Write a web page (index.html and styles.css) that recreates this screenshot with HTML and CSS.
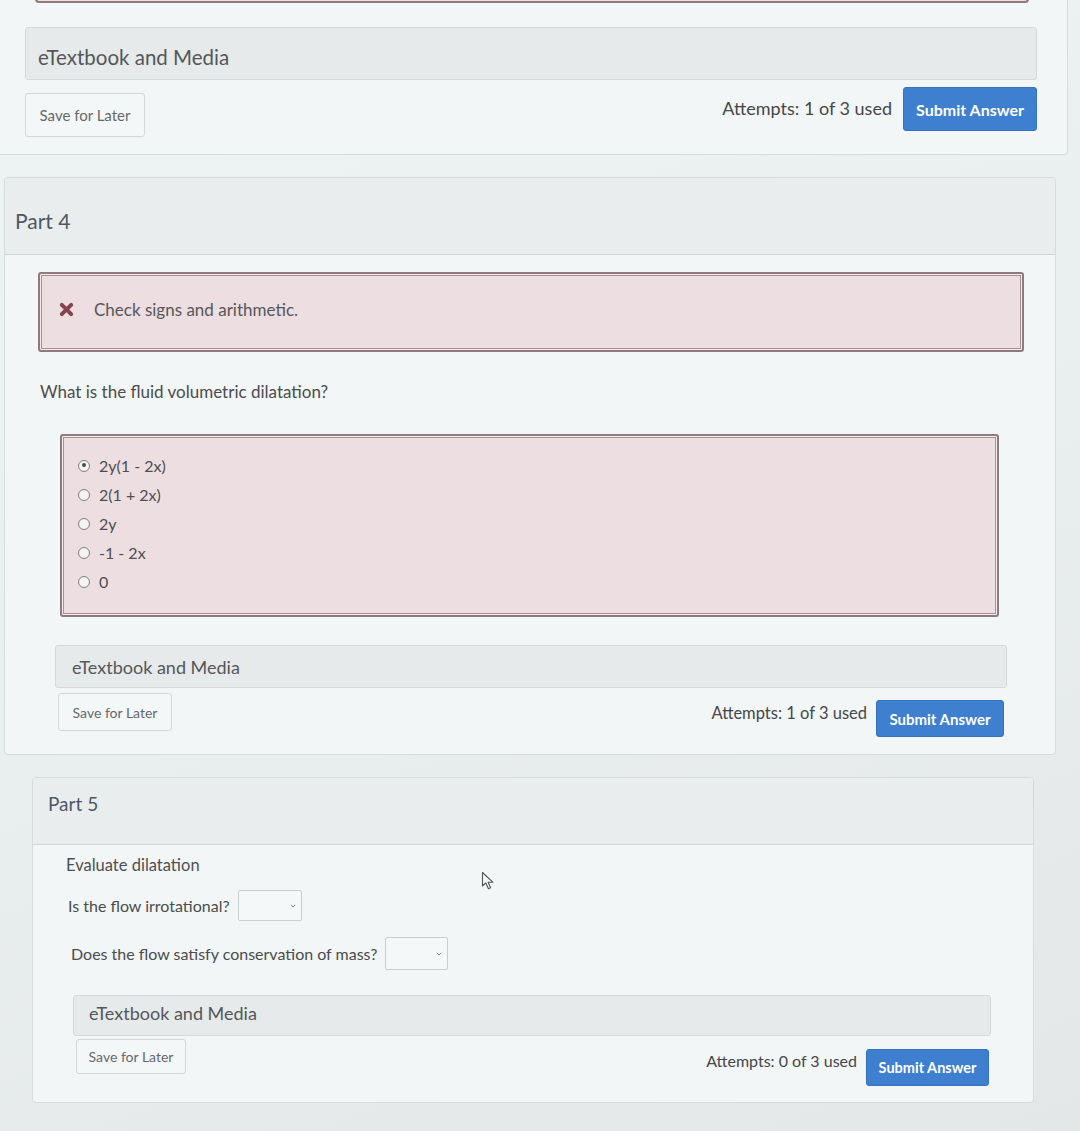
FILE: index.html
```html
<!DOCTYPE html>
<html>
<head>
<meta charset="utf-8">
<link rel="stylesheet" href="styles.css">
</head>
<body>
<div class="page">

  <section class="card card-a">
    <div class="pink-strip"></div>
    <div class="media-bar media-a">eTextbook and Media</div>
    <div class="action-row row-a">
      <button class="save save-a">Save for Later</button>
      <div class="submit-group">
        <span class="attempts attempts-a">Attempts: 1 of 3 used</span>
        <button class="submit submit-a">Submit Answer</button>
      </div>
    </div>
  </section>

  <section class="card card-b">
    <header class="part-head head-b">Part 4</header>
    <div class="part-body body-b">
      <div class="pink-box feedback">
        <svg class="x-icon" width="15" height="15" viewBox="0 0 16 16"><path d="M3 3 L13 13 M13 3 L3 13" stroke="#84434d" stroke-width="4.2" stroke-linecap="round"/></svg>
        <span>Check signs and arithmetic.</span>
      </div>
      <p class="question">What is the fluid volumetric dilatation?</p>
      <div class="pink-box options">
        <label class="opt"><span class="radio checked"></span>2y(1 - 2x)</label>
        <label class="opt"><span class="radio"></span>2(1 + 2x)</label>
        <label class="opt"><span class="radio"></span>2y</label>
        <label class="opt"><span class="radio"></span>-1 - 2x</label>
        <label class="opt"><span class="radio"></span>0</label>
      </div>
      <div class="media-bar media-b">eTextbook and Media</div>
      <div class="action-row row-b">
        <button class="save save-b">Save for Later</button>
        <div class="submit-group">
          <span class="attempts attempts-b">Attempts: 1 of 3 used</span>
          <button class="submit submit-b">Submit Answer</button>
        </div>
      </div>
    </div>
  </section>

  <section class="card card-c">
    <header class="part-head head-c">Part 5</header>
    <div class="part-body body-c">
      <p class="eval">Evaluate dilatation</p>
      <div class="ask ask-1">
        <span>Is the flow irrotational?</span>
        <span class="select sel-1"><svg width="6" height="4" viewBox="0 0 6 4"><path d="M0.8 0.8 L3 3 L5.2 0.8" fill="none" stroke="#888" stroke-width="1"/></svg></span>
      </div>
      <div class="ask ask-2">
        <span>Does the flow satisfy conservation of mass?</span>
        <span class="select sel-2"><svg width="6" height="4" viewBox="0 0 6 4"><path d="M0.8 0.8 L3 3 L5.2 0.8" fill="none" stroke="#888" stroke-width="1"/></svg></span>
      </div>
      <div class="media-bar media-c">eTextbook and Media</div>
      <div class="action-row row-c">
        <button class="save save-c">Save for Later</button>
        <div class="submit-group">
          <span class="attempts attempts-c">Attempts: 0 of 3 used</span>
          <button class="submit submit-c">Submit Answer</button>
        </div>
      </div>
      <svg class="cursor" width="16" height="20" viewBox="0 0 16 20"><path d="M1.5 1.5 L1.5 15 L4.8 12 L7.4 17.8 L9.6 16.8 L7.1 11.2 L11.8 11.2 Z" fill="#f4f6f6" stroke="#555" stroke-width="1.1" stroke-linejoin="round"/></svg>
    </div>
  </section>

</div>
</body>
</html>
```

FILE: styles.css
```css
* { box-sizing: border-box; }
html, body { margin: 0; padding: 0; }
body {
  width: 1080px;
  height: 1131px;
  overflow: hidden;
  font-family: Lato, "Open Sans", "Liberation Sans", sans-serif;
  color: #4a4c4e;
  background: linear-gradient(160deg, #eef3f3 0%, #e9eeee 50%, #e3e7e8 100%);
}
.page { display: flex; flex-direction: column; }

.card {
  background: #f2f6f6;
  border: 1px solid #d6dbdb;
  border-radius: 4px;
}
.card-a {
  margin: -40px 0 0 -2px;
  width: 1070px;
  padding: 0 30px 17px 26px;
  border-top: none;
}
.card-b {
  margin: 22px 0 0 4px;
  width: 1052px;
  overflow: hidden;
}
.card-c {
  margin: 22px 0 0 32px;
  width: 1002px;
  overflow: hidden;
}

.pink-strip {
  height: 43px;
  margin: 0 8px 24px 10px;
  background: #eedfe2;
  border: 2px solid #8c7a7d;
  border-top: none;
  border-radius: 0 0 4px 4px;
}

.media-bar {
  display: flex;
  align-items: center;
  background: #e6eaea;
  border: 1px solid #d4d9d9;
  border-radius: 3px;
  color: #555759;
}
.media-a { height: 53px; padding: 7px 0 0 12px; font-size: 20.5px; }
.media-b { height: 43px; margin: 28px 17px 0 17px; padding-left: 16px; font-size: 18px; }
.media-c { height: 41px; margin: 25px 0 0 7px; padding: 0 0 6px 15px; font-size: 18px; }

.action-row {
  display: flex;
  justify-content: space-between;
  align-items: flex-start;
}
.row-a { margin-top: 7px; }
.row-b { margin: 5px 20px 0 20px; }
.row-c { margin: 3px 2px 0 10px; }

.save {
  font-family: inherit;
  background: #f4f7f7;
  border: 1px solid #d3d8d8;
  border-radius: 3px;
  color: #66696b;
  padding: 0;
  cursor: pointer;
}
.save-a { width: 120px; height: 44px; margin-top: 6px; font-size: 15px; }
.save-b { width: 114px; height: 38px; font-size: 14px; }
.save-c { width: 110px; height: 35px; font-size: 14px; }

.submit-group { display: flex; align-items: center; }
.attempts { color: #45474a; }
.attempts-a { font-size: 18px; margin-right: 11px; margin-top: -2px; }
.attempts-b { font-size: 16.5px; margin-right: 9px; margin-top: -4px; }
.attempts-c { font-size: 16px; margin-right: 9px; margin-top: -4px; }

.submit {
  font-family: inherit;
  font-weight: 700;
  color: #ffffff;
  background: #3e7fd0;
  border: 1px solid #3572c0;
  border-radius: 3px;
  padding: 0;
  cursor: pointer;
}
.submit-a { width: 134px; height: 44px; font-size: 16px; }
.submit-b { width: 128px; height: 37px; font-size: 15px; margin-top: 7px; }
.submit-c { width: 123px; height: 37px; font-size: 14.5px; margin-top: 10px; }

.part-head {
  display: flex;
  align-items: center;
  background: #e9eded;
  border-bottom: 1px solid #d0d5d5;
  color: #4f5866;
}
.head-b { height: 77px; padding: 8px 0 0 10px; font-size: 21px; }
.head-c { height: 67px; padding: 0 0 16px 15px; font-size: 19px; }

.body-b { padding: 17px 31px 17px 33px; }
.body-c { position: relative; padding: 10px 42px 16px 33px; }

.pink-box {
  background: #eddee1;
  border: 2px solid #8c7a7d;
  border-radius: 3px;
  box-shadow: inset 0 0 0 1px #f6ecee, inset 0 0 0 2px #a49396;
}
.feedback {
  height: 80px;
  display: flex;
  align-items: center;
  padding: 0 0 6px 19px;
  font-size: 17px;
  color: #55575a;
}
.x-icon { margin-right: 20px; flex: none; }

.question {
  margin: 30px 0 0 2px;
  font-size: 17px;
  line-height: 20px;
  color: #4a4c4e;
}

.options {
  height: 183px;
  margin: 32px 25px 0 22px;
  padding: 15px 0 0 16px;
  display: flex;
  flex-direction: column;
}
.opt {
  display: flex;
  align-items: center;
  height: 29px;
  font-size: 16px;
  color: #4d4f52;
}
.radio {
  width: 12px;
  height: 12px;
  border: 1.5px solid #7b7e80;
  border-radius: 50%;
  margin-right: 9px;
  background: #f7f2f3;
  position: relative;
  flex: none;
}
.radio.checked::after {
  content: "";
  position: absolute;
  left: 2.5px; top: 2.5px;
  width: 4px; height: 4px;
  border-radius: 50%;
  background: #4a4c4e;
}

.eval {
  margin: 0;
  font-size: 16.5px;
  line-height: 20px;
  color: #4d4f52;
}
.ask {
  display: flex;
  align-items: center;
  font-size: 16px;
  color: #4a4c4e;
}
.ask-1 { margin: 15px 0 0 2px; }
.ask-2 { margin: 16px 0 0 5px; }
.select {
  display: flex;
  align-items: center;
  justify-content: flex-end;
  margin-left: 8px;
  background: #f5f8f8;
  border: 1px solid #c9cece;
  border-radius: 2px;
  padding-right: 5px;
}
.sel-1 { width: 64px; height: 31px; }
.sel-2 { width: 63px; height: 33px; }

.cursor {
  position: absolute;
  left: 448px;
  top: 26px;
}
```
